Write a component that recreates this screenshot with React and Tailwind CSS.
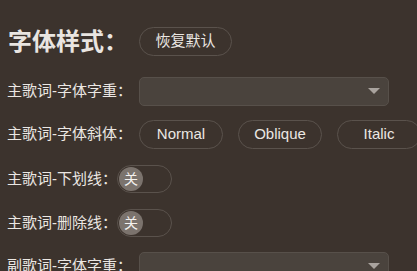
import { useState } from "react";

const cjk = { fontFamily: '"Liberation Sans", "Noto Sans CJK SC", sans-serif' };

function Select() {
  return (
    <div className="ml-[7px] flex h-[29px] w-[250px] items-center justify-end rounded-[5px] border border-[#57504a] bg-[#4a433d] pr-[8px]">
      <svg width="12" height="7" viewBox="0 0 12 7">
        <path d="M0 0 L12 0 L6 6 Z" fill="#a9a39e" />
      </svg>
    </div>
  );
}

function Switch() {
  return (
    <div className="flex h-[28px] w-[55px] items-center rounded-full border border-[#5a524c] pl-[1px]">
      <div className="flex h-[24px] w-[24px] items-center justify-center rounded-full bg-[#7b736d] text-[14px] text-[#f4f1ee]">
        关
      </div>
    </div>
  );
}

function Pill({ children }) {
  return (
    <button className="flex h-[29px] w-[84px] shrink-0 items-center justify-center rounded-full border border-[#5a524c] text-[15px] text-[#ebe7e3]">
      {children}
    </button>
  );
}

export default function App() {
  const [styles] = useState(["Normal", "Oblique", "Italic"]);

  return (
    <div className="h-[271px] w-[417px] overflow-hidden bg-[#3c332d] pl-[7px] pt-[27px] text-[#ebe7e3]" style={cjk}>
      <div className="flex h-[29px] items-center">
        <span className="ml-[1px] text-[24px] font-bold text-[#e9e5e1]">字体样式：</span>
        <button className="ml-[11px] flex h-[29px] w-[93px] items-center justify-center rounded-full border border-[#5a524c] text-[15px] text-[#ebe7e3]">
          恢复默认
        </button>
      </div>

      <div className="mt-[21px] flex h-[29px] items-center">
        <span className="text-[15px]">主歌词-字体字重：</span>
        <Select />
      </div>

      <div className="mt-[14px] flex h-[29px] items-center">
        <span className="shrink-0 text-[15px]">主歌词-字体斜体：</span>
        <div className="ml-[7px] flex gap-[15px]">
          {styles.map((s) => (
            <Pill key={s}>{s}</Pill>
          ))}
        </div>
      </div>

      <div className="mt-[16px] flex h-[28px] items-center">
        <span className="text-[15px]">主歌词-下划线：</span>
        <Switch />
      </div>

      <div className="mt-[16px] flex h-[28px] items-center">
        <span className="text-[15px]">主歌词-删除线：</span>
        <Switch />
      </div>

      <div className="mt-[15px] flex h-[29px] items-center">
        <span className="text-[15px]">副歌词-字体字重：</span>
        <Select />
      </div>
    </div>
  );
}
